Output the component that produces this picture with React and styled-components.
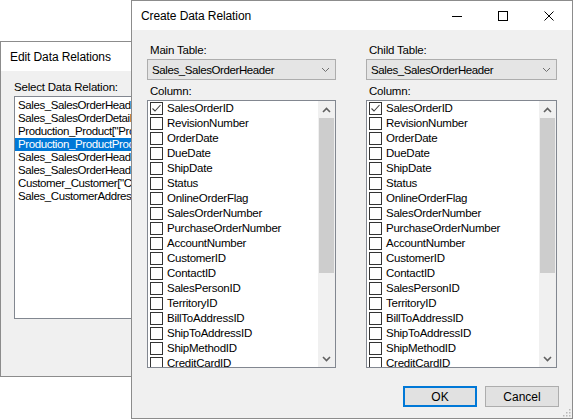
import React from "react";
import styled, { createGlobalStyle } from "styled-components";

const columns = [
  "SalesOrderID",
  "RevisionNumber",
  "OrderDate",
  "DueDate",
  "ShipDate",
  "Status",
  "OnlineOrderFlag",
  "SalesOrderNumber",
  "PurchaseOrderNumber",
  "AccountNumber",
  "CustomerID",
  "ContactID",
  "SalesPersonID",
  "TerritoryID",
  "BillToAddressID",
  "ShipToAddressID",
  "ShipMethodID",
  "CreditCardID",
  "CreditCardApprovalCode",
];

const relations = [
  'Sales_SalesOrderHeader["SalesOrderID"]',
  'Sales_SalesOrderDetail["SalesOrderID"]',
  'Production_Product["ProductID"]',
  "Production_ProductProductPhoto",
  'Sales_SalesOrderHeader["CustomerID"]',
  'Sales_SalesOrderHeader["ContactID"]',
  'Customer_Customer["CustomerID"]',
  "Sales_CustomerAddress",
];

const GlobalStyle = createGlobalStyle`
  body {
    margin: 0;
    background: #fff;
    font-family: "Liberation Sans", Arial, sans-serif;
    color: #000;
  }
`;

const Desktop = styled.div`
  position: relative;
  width: 573px;
  height: 419px;
  overflow: hidden;
  background: #fff;
`;

const Window = styled.div`
  position: absolute;
  left: ${(p) => p.$left}px;
  top: ${(p) => p.$top}px;
  width: ${(p) => p.$width}px;
  height: ${(p) => p.$height}px;
  box-sizing: border-box;
  border: 1px solid #8c8c8c;
  background: #f0f0f0;
  display: flex;
  flex-direction: column;
`;

const TitleBar = styled.div`
  height: ${(p) => p.$height}px;
  flex: none;
  background: #fff;
  display: flex;
  align-items: center;
  padding-left: 9px;
  font-size: 12px;
  letter-spacing: -0.1px;
`;

const TitleText = styled.span`
  flex: 1;
`;

const CaptionButton = styled.div`
  width: 46px;
  height: 100%;
  display: flex;
  align-items: center;
  justify-content: center;
`;

const Label = styled.div`
  font-size: 11.5px;
  line-height: 14px;
  height: 14px;
  letter-spacing: -0.2px;
  margin-bottom: 2px;
  padding-left: ${(p) => p.$indent || 0}px;
  white-space: nowrap;
`;

/* back dialog */
const BackBody = styled.div`
  padding: 9px 0 0 13px;
`;

const RelationList = styled.div`
  width: 290px;
  height: 223px;
  box-sizing: border-box;
  border: 1px solid #828790;
  background: #fff;
  padding-top: 2px;
`;

const RelationRow = styled.div`
  height: 13px;
  line-height: 13px;
  padding-left: 3px;
  font-size: 11.5px;
  letter-spacing: -0.4px;
  white-space: nowrap;
  background: ${(p) => (p.$selected ? "#0078d7" : "transparent")};
  color: ${(p) => (p.$selected ? "#fff" : "#000")};
`;

/* front dialog */
const Body = styled.div`
  flex: 1;
  display: flex;
  flex-direction: column;
  padding: 13px 13px 0 15px;
`;

const Columns = styled.div`
  display: grid;
  grid-template-columns: 189px 191px;
  column-gap: 30px;
`;

const Column = styled.div`
  display: flex;
  flex-direction: column;
`;

const Combo = styled.div`
  height: 21px;
  box-sizing: border-box;
  border: 1px solid #adadad;
  background: #e5e5e5;
  display: flex;
  align-items: center;
  padding: 0 5px 0 4px;
  margin-bottom: 4px;
  font-size: 11.5px;
  letter-spacing: -0.4px;
`;

const ComboText = styled.span`
  flex: 1;
  white-space: nowrap;
`;

const ListBox = styled.div`
  height: 268px;
  box-sizing: border-box;
  border: 1px solid #828790;
  background: #fff;
  display: flex;
`;

const Items = styled.div`
  flex: 1;
  overflow: hidden;
`;

const Item = styled.div`
  height: 15px;
  line-height: 15px;
  display: flex;
  align-items: center;
  padding-left: 2px;
  gap: 4px;
  font-size: 11.5px;
  letter-spacing: -0.25px;
  white-space: nowrap;
`;

const CheckBox = styled.div`
  width: 13px;
  height: 13px;
  flex: none;
  box-sizing: border-box;
  border: 1px solid #333;
  background: #fff;
  display: flex;
  align-items: center;
  justify-content: center;
`;

const ScrollBar = styled.div`
  width: 17px;
  flex: none;
  background: #f0f0f0;
  display: flex;
  flex-direction: column;
`;

const ScrollArrow = styled.div`
  height: 17px;
  flex: none;
  display: flex;
  align-items: center;
  justify-content: center;
`;

const Track = styled.div`
  flex: 1;
  padding: 0 1px;
`;

const Thumb = styled.div`
  height: 155px;
  background: #cdcdcd;
`;

const Footer = styled.div`
  display: flex;
  justify-content: flex-end;
  gap: 8px;
  margin-top: 18px;
`;

const Button = styled.div`
  width: 74px;
  height: 21px;
  box-sizing: border-box;
  border: ${(p) => (p.$default ? "2px solid #0078d7" : "1px solid #adadad")};
  background: #e1e1e1;
  display: flex;
  align-items: center;
  justify-content: center;
  font-size: 12px;
`;

const Grip = styled.svg`
  position: absolute;
  right: 1px;
  bottom: 1px;
`;

const Chevron = ({ up, heavy }) => (
  <svg width="9" height="6" viewBox="0 0 9 6">
    <polyline
      points={up ? "1,5 4.5,1.5 8,5" : "1,1 4.5,4.5 8,1"}
      fill="none"
      stroke={heavy ? "#606060" : "#707070"}
      strokeWidth={heavy ? 1.6 : 1}
    />
  </svg>
);

const Check = () => (
  <svg width="11" height="11" viewBox="0 0 11 11">
    <polyline points="1.5,5.5 4,8 9.5,2" fill="none" stroke="#404040" strokeWidth="1.1" />
  </svg>
);

const TableColumn = ({ title }) => (
  <Column>
    <Label $indent={3}>{title}</Label>
    <Combo>
      <ComboText>Sales_SalesOrderHeader</ComboText>
      <Chevron />
    </Combo>
    <Label $indent={3}>Column:</Label>
    <ListBox>
      <Items>
        {columns.map((name, i) => (
          <Item key={name}>
            <CheckBox>{i === 0 && <Check />}</CheckBox>
            {name}
          </Item>
        ))}
      </Items>
      <ScrollBar>
        <ScrollArrow>
          <Chevron up heavy />
        </ScrollArrow>
        <Track>
          <Thumb />
        </Track>
        <ScrollArrow>
          <Chevron heavy />
        </ScrollArrow>
      </ScrollBar>
    </ListBox>
  </Column>
);

export default function App() {
  return (
    <Desktop>
      <GlobalStyle />

      <Window $left={0} $top={41} $width={320} $height={336}>
        <TitleBar $height={29}>
          <TitleText>Edit Data Relations</TitleText>
        </TitleBar>
        <BackBody>
          <Label>Select Data Relation:</Label>
          <RelationList>
            {relations.map((r, i) => (
              <RelationRow key={r} $selected={i === 3}>
                {r}
              </RelationRow>
            ))}
          </RelationList>
        </BackBody>
      </Window>

      <Window $left={131} $top={0} $width={442} $height={419}>
        <TitleBar $height={29}>
          <TitleText>Create Data Relation</TitleText>
          <CaptionButton>
            <svg width="10" height="10" viewBox="0 0 10 10">
              <line x1="0" y1="5.5" x2="10" y2="5.5" stroke="#000" strokeWidth="1" />
            </svg>
          </CaptionButton>
          <CaptionButton>
            <svg width="10" height="10" viewBox="0 0 10 10">
              <rect x="0.5" y="0.5" width="9" height="9" fill="none" stroke="#000" strokeWidth="1" />
            </svg>
          </CaptionButton>
          <CaptionButton>
            <svg width="10" height="10" viewBox="0 0 10 10">
              <path d="M0.5 0.5 L9.5 9.5 M9.5 0.5 L0.5 9.5" stroke="#000" strokeWidth="1" />
            </svg>
          </CaptionButton>
        </TitleBar>
        <Body>
          <Columns>
            <TableColumn title="Main Table:" />
            <TableColumn title="Child Table:" />
          </Columns>
          <Footer>
            <Button $default>OK</Button>
            <Button>Cancel</Button>
          </Footer>
        </Body>
        <Grip width="10" height="10" viewBox="0 0 10 10">
          {[
            [8, 2],
            [5, 5],
            [8, 5],
            [2, 8],
            [5, 8],
            [8, 8],
          ].map(([x, y]) => (
            <rect key={`${x}-${y}`} x={x} y={y} width="1.5" height="1.5" fill="#b8b8b8" />
          ))}
        </Grip>
      </Window>
    </Desktop>
  );
}
